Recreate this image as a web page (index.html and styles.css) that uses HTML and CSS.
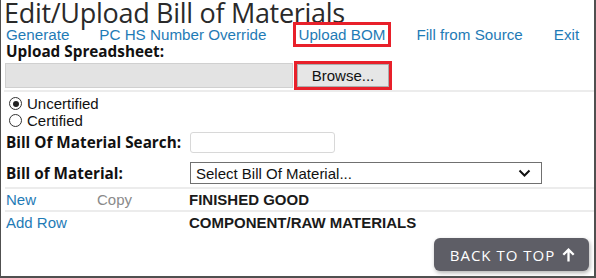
FILE: index.html
```html
<!DOCTYPE html>
<html>
<head>
<meta charset="utf-8">
<link rel="stylesheet" href="styles.css">
</head>
<body>
<div class="frame">
  <h1 class="title">Edit/Upload Bill of Materials</h1>
  <nav class="nav">
    <a class="link nav-generate">Generate</a>
    <a class="link nav-override">PC HS Number Override</a>
    <a class="link nav-upload hl">Upload BOM</a>
    <a class="link nav-fill">Fill from Source</a>
    <a class="link nav-exit">Exit</a>
  </nav>
  <div class="label upload-label">Upload Spreadsheet:</div>
  <div class="file-row">
    <div class="file-field"></div>
    <div class="browse-wrap hl"><button class="browse">Browse...</button></div>
  </div>
  <div class="radios">
    <label class="radio"><span class="dot checked"></span>Uncertified</label>
    <label class="radio"><span class="dot"></span>Certified</label>
  </div>
  <div class="field-row search-row">
    <div class="label">Bill Of Material Search:</div>
    <div class="search-input"></div>
  </div>
  <div class="field-row select-row">
    <div class="label">Bill of Material:</div>
    <div class="select">
      <span>Select Bill Of Material...</span>
      <svg class="chev" width="13" height="9" viewBox="0 0 13 9"><path d="M1.5 1.5 L6.5 6.5 L11.5 1.5" fill="none" stroke="#111" stroke-width="2"/></svg>
    </div>
  </div>
  <div class="table-row first">
    <a class="link col1">New</a>
    <span class="muted col2">Copy</span>
    <span class="head">FINISHED GOOD</span>
  </div>
  <div class="table-row last">
    <a class="link col1">Add Row</a>
    <span class="col2"></span>
    <span class="head">COMPONENT/RAW MATERIALS</span>
  </div>
  <button class="back-top">BACK TO TOP
    <svg width="13" height="14" viewBox="0 0 13 14"><path d="M6.5 13.5 V1.8 M1.3 6.8 L6.5 1.6 L11.7 6.8" fill="none" stroke="#fff" stroke-width="2.3"/></svg>
  </button>
</div>
</body>
</html>
```

FILE: styles.css
```css
html, body {
  margin: 0;
  padding: 0;
  background: #fff;
}
.frame {
  position: relative;
  width: 596px;
  height: 278px;
  box-sizing: border-box;
  border-left: 1px solid #505050;
  border-right: 2px solid #505050;
  border-bottom: 2px solid #505050;
  overflow: hidden;
  font-family: "Liberation Sans", Arial, sans-serif;
  color: #222;
}
.title {
  margin: 0;
  padding-left: 3px;
  font-family: "Open Sans", sans-serif;
  font-weight: 400;
  font-size: 27px;
  line-height: 26px;
  height: 24px;
  color: #2a2a2a;
  letter-spacing: -0.3px;
  white-space: nowrap;
}
.nav {
  display: flex;
  height: 20px;
  align-items: center;
  font-size: 15.2px;
}
.link {
  color: #1f7bb6;
  text-decoration: none;
}
.nav-generate { margin-left: 5px; }
.nav-override { margin-left: 30px; }
.nav-upload {
  margin-left: 30px;
  width: 92px;
  height: 19px;
  line-height: 19px;
  padding-left: 2px;
  box-sizing: border-box;
  white-space: nowrap;
}
.nav-fill { margin-left: 28px; }
.nav-exit { margin-left: 31px; }
.hl {
  outline: 3px solid #e8202a;
  outline-offset: 0;
}
.label {
  font-family: "Open Sans", sans-serif;
  font-weight: 700;
  font-size: 15.3px;
  color: #111;
  white-space: nowrap;
}
.upload-label {
  margin-left: 5px;
  line-height: 16px;
  height: 16px;
  margin-top: -1px;
}
.file-row {
  display: flex;
  align-items: center;
  margin-top: 3px;
  margin-left: 4px;
  height: 27px;
}
.file-field {
  width: 288px;
  height: 25px;
  box-sizing: border-box;
  background: #e3e3e3;
  border: 1px solid #d0d0d0;
}
.browse-wrap {
  margin-left: 4px;
  display: flex;
}
.browse {
  width: 92px;
  height: 23px;
  background: #e6e6e6;
  border: 1px solid #adadad;
  font-family: "Liberation Sans", Arial, sans-serif;
  font-size: 15px;
  color: #111;
  padding: 0;
}
.radios {
  border-top: 2px solid #ececec;
  margin-top: 1px;
  margin-left: 3px;
  padding-top: 3px;
  padding-left: 5px;
  font-size: 15px;
  color: #111;
}
.radio {
  display: flex;
  align-items: center;
  height: 17px;
  line-height: 17px;
}
.dot {
  width: 11px;
  height: 11px;
  border: 1px solid #333;
  border-radius: 50%;
  margin-right: 5px;
  position: relative;
  box-sizing: content-box;
}
.dot.checked::after {
  content: "";
  position: absolute;
  left: 2.5px;
  top: 2.5px;
  width: 6px;
  height: 6px;
  border-radius: 50%;
  background: #222;
}
.field-row {
  display: flex;
  align-items: center;
  margin-left: 5px;
}
.field-row .label {
  width: 184px;
}
.search-row {
  margin-top: 2px;
  height: 22px;
}
.search-input {
  width: 145px;
  height: 21px;
  box-sizing: border-box;
  border: 1px solid #d8d8d8;
  border-radius: 3px;
}
.select-row {
  margin-top: 9px;
  height: 22px;
  border-bottom: 2px solid #ececec;
  padding-bottom: 3px;
  margin-left: 4px;
  padding-left: 1px;
}
.select {
  display: flex;
  align-items: center;
  justify-content: space-between;
  padding: 0 10px 0 5px;
  box-sizing: border-box;
  width: 352px;
  height: 22px;
  border: 1px solid #707070;
  font-size: 15px;
  color: #111;
}
.table-row {
  display: flex;
  align-items: center;
  height: 21px;
  margin-left: 4px;
  padding-left: 1px;
  font-size: 15px;
  border-bottom: 2px solid #ececec;
}
.table-row.last {
  border-bottom: 0;
}
.col1 { width: 91px; }
.col2 { width: 92px; }
.muted { color: #8a8a8a; }
.head {
  font-weight: 700;
  color: #1a1a1a;
}
.back-top {
  position: absolute;
  left: 433px;
  top: 238px;
  width: 155px;
  height: 33px;
  border: 0;
  border-radius: 6px;
  background: #5e5e66;
  color: #fff;
  font-family: "Open Sans", sans-serif;
  font-size: 15px;
  letter-spacing: 1px;
  display: flex;
  align-items: center;
  justify-content: center;
  gap: 7px;
  padding: 0 0 0 2px;
  box-shadow: 1px 2px 4px rgba(0,0,0,0.3);
}
```
